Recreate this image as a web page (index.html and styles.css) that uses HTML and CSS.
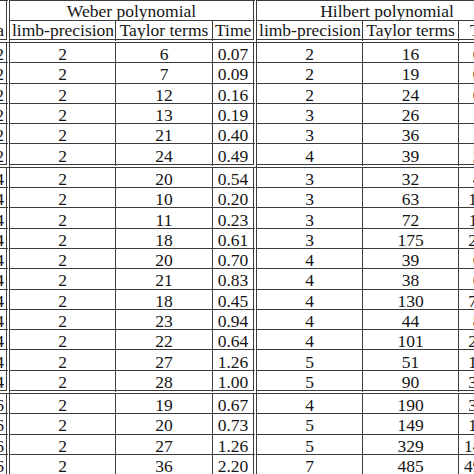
FILE: index.html
```html
<!DOCTYPE html>
<html lang="en">
<head>
<meta charset="utf-8">
<title>Weber and Hilbert polynomial timings</title>
<link rel="stylesheet" href="styles.css">
</head>
<body>
<table class="results">
  <colgroup>
    <col class="w0"><col class="w1"><col class="w2"><col class="w3"><col class="w4"><col class="w5"><col class="w6">
  </colgroup>
  <thead>
    <tr class="h1">
      <th class="c0"></th>
      <th colspan="3" class="dbl">Weber polynomial</th>
      <th colspan="3">Hilbert polynomial</th>
    </tr>
    <tr class="h2">
      <th class="c0">a</th>
      <th>limb-precision</th>
      <th>Taylor terms</th>
      <th class="dbl">Time</th>
      <th>limb-precision</th>
      <th>Taylor terms</th>
      <th>Time</th>
    </tr>
  </thead>
  <tbody>
    <tr><td class="c0">2</td><td>2</td><td>6</td><td class="dbl">0.07</td><td>2</td><td>16</td><td>0.68</td></tr>
    <tr><td class="c0">2</td><td>2</td><td>7</td><td class="dbl">0.09</td><td>2</td><td>19</td><td>0.81</td></tr>
    <tr><td class="c0">2</td><td>2</td><td>12</td><td class="dbl">0.16</td><td>2</td><td>24</td><td>0.97</td></tr>
    <tr><td class="c0">2</td><td>2</td><td>13</td><td class="dbl">0.19</td><td>3</td><td>26</td><td>1.32</td></tr>
    <tr><td class="c0">2</td><td>2</td><td>21</td><td class="dbl">0.40</td><td>3</td><td>36</td><td>1.85</td></tr>
    <tr class="end"><td class="c0">2</td><td>2</td><td>24</td><td class="dbl">0.49</td><td>4</td><td>39</td><td>2.73</td></tr>

    <tr><td class="c0">4</td><td>2</td><td>20</td><td class="dbl">0.54</td><td>3</td><td>32</td><td>4.06</td></tr>
    <tr><td class="c0">4</td><td>2</td><td>10</td><td class="dbl">0.20</td><td>3</td><td>63</td><td>10.42</td></tr>
    <tr><td class="c0">4</td><td>2</td><td>11</td><td class="dbl">0.23</td><td>3</td><td>72</td><td>11.87</td></tr>
    <tr><td class="c0">4</td><td>2</td><td>18</td><td class="dbl">0.61</td><td>3</td><td>175</td><td>28.35</td></tr>
    <tr><td class="c0">4</td><td>2</td><td>20</td><td class="dbl">0.70</td><td>4</td><td>39</td><td>6.91</td></tr>
    <tr><td class="c0">4</td><td>2</td><td>21</td><td class="dbl">0.83</td><td>4</td><td>38</td><td>6.74</td></tr>
    <tr><td class="c0">4</td><td>2</td><td>18</td><td class="dbl">0.45</td><td>4</td><td>130</td><td>72.18</td></tr>
    <tr><td class="c0">4</td><td>2</td><td>23</td><td class="dbl">0.94</td><td>4</td><td>44</td><td>8.52</td></tr>
    <tr><td class="c0">4</td><td>2</td><td>22</td><td class="dbl">0.64</td><td>4</td><td>101</td><td>21.63</td></tr>
    <tr><td class="c0">4</td><td>2</td><td>27</td><td class="dbl">1.26</td><td>5</td><td>51</td><td>15.09</td></tr>
    <tr class="end"><td class="c0">4</td><td>2</td><td>28</td><td class="dbl">1.00</td><td>5</td><td>90</td><td>31.47</td></tr>

    <tr><td class="c0">6</td><td>2</td><td>19</td><td class="dbl">0.67</td><td>4</td><td>190</td><td>36.71</td></tr>
    <tr><td class="c0">6</td><td>2</td><td>20</td><td class="dbl">0.73</td><td>5</td><td>149</td><td>17.28</td></tr>
    <tr><td class="c0">6</td><td>2</td><td>27</td><td class="dbl">1.26</td><td>5</td><td>329</td><td>145.62</td></tr>
    <tr><td class="c0">6</td><td>2</td><td>36</td><td class="dbl">2.20</td><td>7</td><td>485</td><td>493.87</td></tr>
  </tbody>
</table>
</body>
</html>
```
FILE: styles.css
```css
html, body {
  margin: 0;
  padding: 0;
  background: #ffffff;
  overflow: hidden;
}

.results {
  margin-left: -34px;
  width: 552px;
  table-layout: fixed;
  border-collapse: separate;
  border-spacing: 0;
  font-family: "Liberation Serif", "Times New Roman", serif;
  font-size: 17.5px;
  line-height: 16px;
  color: #151515;
}

.w0 { width: 44px; }
.w1 { width: 106px; }
.w2 { width: 97px; }
.w3 { width: 44px; }
.w4 { width: 106px; }
.w5 { width: 96px; }
.w6 { width: 59px; }

.results th,
.results td {
  box-sizing: border-box;
  font-weight: normal;
  text-align: center;
  vertical-align: middle;
  white-space: nowrap;
  overflow: hidden;
  padding: 0 2px;
  border-right: 1px solid #3c3c3c;
  border-bottom: 1px solid #3c3c3c;
}

.results .c0 {
  text-align: right;
  padding-right: 2px;
  border-right: 4px double #3c3c3c;
}

.results .dbl {
  border-right: 4px double #3c3c3c;
}

.h1 th {
  height: 21px;
  border-top: 1px solid #3c3c3c;
  padding-top: 1px;
}

.h1 .c0 {
  border-bottom: none;
}

.h2 th {
  height: 22px;
  padding-bottom: 1px;
  border-bottom: 4px double #3c3c3c;
}

.results td {
  height: 20.3px;
  padding-top: 3px;
  padding-bottom: 0;
}

.results tr.end td {
  height: 23.3px;
  border-bottom: 4px double #3c3c3c;
}
```
